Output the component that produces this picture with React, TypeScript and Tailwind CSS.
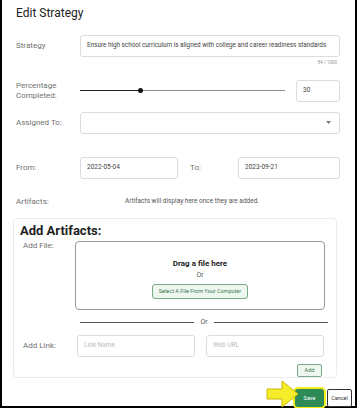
const label = 'text-[8px] leading-[10px] text-[#707070]';
const box = 'h-[22px] rounded-[3px] border border-[#dcdcdc] bg-white';

function Field({
  children,
  className = '',
  size = 'text-[6.5px]',
}: {
  children?: React.ReactNode;
  className?: string;
  size?: string;
}) {
  return <div className={`${box} ${size} flex items-center px-[6px] text-[#444] ${className}`}>{children}</div>;
}

export default function App() {
  return (
    <div
      className="relative h-[408px] w-[357px] border-x-2 border-b-2 border-black bg-white"
      style={{ fontFamily: 'Roboto, "Liberation Sans", sans-serif' }}
    >
      <div className="pl-[14px] pr-[14px] pt-[6px]">
        <h1 className="text-[12px] leading-[14px] text-[#222]">Edit Strategy</h1>

        <div className="mt-[15px] flex items-center">
          <span className={`${label} w-[64px]`}>Strategy</span>
          <Field className="w-[260px]" size="text-[6.35px]">
            Ensure high school curriculum is aligned with college and career readiness standards
          </Field>
        </div>
        <div className="mr-[4px] mt-[3px] text-right text-[4.5px] text-[#999]">84 / 1000</div>

        <div className="mt-[13px] flex items-center">
          <span className={`${label} w-[64px]`}>
            Percentage
            <br />
            Completed:
          </span>
          <div className="relative h-[22px] w-[205px]">
            <div className="absolute left-0 right-0 top-[10px] h-px bg-[#8a8a8a]" />
            <div className="absolute left-0 top-[10px] h-px w-[61px] bg-[#222]" />
            <div className="absolute left-[58px] top-[8px] h-[5px] w-[5px] rounded-full bg-[#111]" />
          </div>
          <Field className="ml-[11px] w-[44px]">30</Field>
        </div>

        <div className="mt-[10px] flex items-center">
          <span className={`${label} w-[64px]`}>Assigned To:</span>
          <Field className="w-[260px] justify-end pr-[8px]">
            <svg width="5" height="3" viewBox="0 0 5 3">
              <polygon points="0,0 5,0 2.5,3" fill="#777" />
            </svg>
          </Field>
        </div>

        <div className="mt-[23px] flex items-center">
          <span className={`${label} w-[64px]`}>From:</span>
          <Field className="w-[98px]">2022-05-04</Field>
          <span className={`${label} ml-[12px] w-[48px]`}>To:</span>
          <Field className="w-[102px]">2023-09-21</Field>
        </div>

        <div className="mt-[18px] flex items-center">
          <span className={`${label} w-[64px]`}>Artifacts:</span>
          <span className="ml-[45px] text-[6.5px] text-[#555]">
            Artifacts will display here once they are added.
          </span>
        </div>
      </div>

      <div className="ml-[11px] mt-[11px] h-[160px] w-[324px] rounded-[4px] border border-[#ececec] px-[6px] pt-[5px]">
        <h2 className="text-[13px] font-bold leading-[14px] text-[#222]">Add Artifacts:</h2>
        <div className="mt-[3px] flex">
          <span className={`${label} ml-[3px] w-[52px]`}>Add File:</span>
          <div className="flex h-[69px] w-[250px] flex-col items-center rounded-[4px] border border-[#999] pt-[17px]">
            <span className="text-[8px] font-bold leading-[10px] text-[#222]">Drag a file here</span>
            <span className="mt-[2px] text-[7px] leading-[9px] text-[#555]">Or</span>
            <button
              type="button"
              className="mt-[4px] h-[15px] rounded-[3px] border border-[#79a88a] bg-[#eef6f0] px-[6px] text-[5.5px] text-[#3d7a55]"
            >
              Select A File From Your Computer
            </button>
          </div>
        </div>

        <div className="ml-[60px] mt-[8px] flex w-[248px] items-center gap-[6px]">
          <div className="h-px flex-1 bg-[#555]" />
          <span className="text-[7px] leading-[9px] text-[#555]">Or</span>
          <div className="h-px flex-1 bg-[#555]" />
        </div>

        <div className="mt-[8px] flex items-center">
          <span className={`${label} ml-[3px] w-[54px]`}>Add Link:</span>
          <Field className="w-[118px] text-[#bbb]">Link Name</Field>
          <Field className="ml-[11px] w-[118px] text-[#bbb]">Web URL</Field>
        </div>

        <div className="mr-[8px] mt-[7px] flex justify-end">
          <button
            type="button"
            className="h-[13px] w-[25px] rounded-[2px] border border-[#79a88a] bg-[#eef6f0] text-[5.5px] text-[#3d7a55]"
          >
            Add
          </button>
        </div>
      </div>

      <div className="mr-[3px] mt-[11px] flex justify-end gap-[3px]">
        <button
          type="button"
          className="h-[18px] w-[29px] rounded-[3px] bg-[#2e8b57] text-[5.5px] text-white ring-2 ring-[#f2ee1e]"
        >
          Save
        </button>
        <button
          type="button"
          className="h-[18px] w-[25px] rounded-[2px] border border-[#333] bg-white text-[5.5px] text-[#333]"
        >
          Cancel
        </button>
      </div>

      <svg className="absolute left-[264px] top-[380px]" width="33" height="28" viewBox="0 0 33 28">
        <polygon
          points="1,9 16,9 16,1 32,14 16,27 16,19 1,19"
          fill="#f5ec2a"
          stroke="#c9b800"
          strokeWidth="1"
        />
      </svg>
    </div>
  );
}
